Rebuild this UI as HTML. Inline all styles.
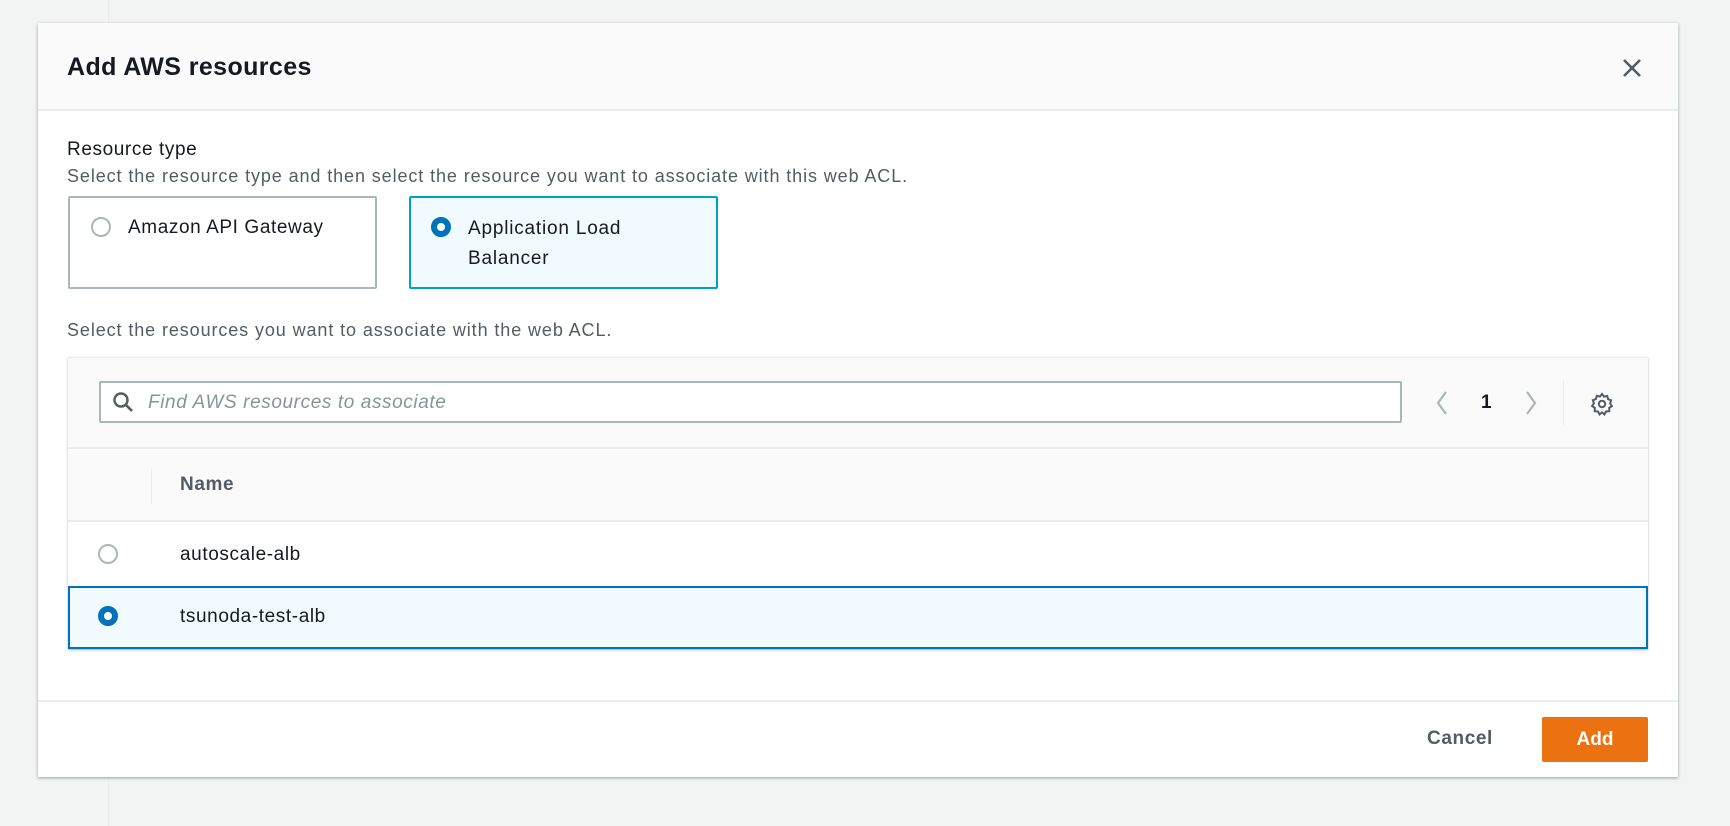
<!DOCTYPE html>
<html><head><meta charset="utf-8"><style>
*{box-sizing:border-box;margin:0;padding:0}
body{width:1730px;height:826px;background:#f2f3f3;font-family:"Liberation Sans",sans-serif;position:relative;overflow:hidden;color:#16191f}
.abs{position:absolute}
.vl{left:108px;top:0;width:1px;height:826px;background:#e9ebed}
.modal{left:38px;top:23px;width:1640px;height:754px;background:#fff;box-shadow:0 1px 3px rgba(0,28,36,.4)}
.hdr{left:0;top:0;width:1640px;height:88px;background:#fafafa;border-bottom:2px solid #eaeded}
.t{font-size:25px;font-weight:bold;left:29px;top:30px;letter-spacing:.4px}
.radio{width:20px;height:20px;border-radius:50%;border:2px solid #aab7b8;background:#fff}
.radio.on{border:6px solid #0073bb}
.txt{font-size:19px;white-space:nowrap;letter-spacing:.6px}
.grey{color:#545b64}
.d{font-size:18px;letter-spacing:.9px}
</style></head><body>
<div class="abs vl"></div>
<div class="abs modal">
 <div class="abs hdr"><div class="abs t">Add AWS resources</div>
  <svg class="abs" style="left:1584px;top:35px" width="20" height="20" viewBox="0 0 20 20"><path d="M2 2L18 18M18 2L2 18" stroke="#545b64" stroke-width="2.6"/></svg>
 </div>
 <div class="abs txt" style="left:29px;top:116px">Resource type</div>
 <div class="abs txt grey d" style="left:29px;top:143px">Select the resource type and then select the resource you want to associate with this web ACL.</div>
 <div class="abs" style="left:30px;top:173px;width:309px;height:93px;border:2px solid #aab7b8;border-radius:2px"></div>
 <div class="abs radio" style="left:53px;top:194px"></div>
 <div class="abs txt" style="left:90px;top:194px">Amazon API Gateway</div>
 <div class="abs" style="left:371px;top:173px;width:309px;height:93px;border:2px solid #00a1c9;border-radius:2px;background:#f1faff"></div>
 <div class="abs radio on" style="left:393px;top:194px"></div>
 <div class="abs txt" style="left:430px;top:191px;line-height:30px;letter-spacing:.8px">Application Load<br>Balancer</div>
 <div class="abs txt grey d" style="left:29px;top:297px">Select the resources you want to associate with the web ACL.</div>
 <div class="abs" style="left:30px;top:334px;width:1580px;height:292px;box-shadow:0 1px 2px rgba(0,28,36,.35);background:#fff;border-top:1px solid #eaeded"></div>
 <div class="abs" style="left:30px;top:335px;width:1580px;height:91px;background:#fafafa;border-bottom:2px solid #eaeded"></div>
 <div class="abs" style="left:61px;top:358px;width:1303px;height:42px;border:2px solid #aab7b8;border-radius:2px;background:#fff"></div>
 <svg class="abs" style="left:74px;top:368px" width="22" height="22" viewBox="0 0 22 22"><circle cx="9" cy="9" r="6.5" fill="none" stroke="#545b64" stroke-width="2.4"/><path d="M14 14L20 20" stroke="#545b64" stroke-width="2.6"/></svg>
 <div class="abs txt" style="left:110px;top:369px;color:#879596;font-style:italic">Find AWS resources to associate</div>
 <svg class="abs" style="left:1397px;top:367px" width="14" height="26" viewBox="0 0 14 26"><path d="M11 2L3 13L11 24" fill="none" stroke="#aab7b8" stroke-width="2.2"/></svg>
 <div class="abs txt" style="left:1443px;top:369px;font-weight:bold">1</div>
 <svg class="abs" style="left:1486px;top:367px" width="14" height="26" viewBox="0 0 14 26"><path d="M3 2L11 13L3 24" fill="none" stroke="#aab7b8" stroke-width="2.2"/></svg>
 <div class="abs" style="left:1525px;top:357px;width:1px;height:45px;background:#eaeded"></div>
 <svg class="abs" style="left:1552px;top:369px" width="24" height="24" viewBox="0 0 24 24"><path d="M12 2l2 2.6 3.2-.6.9 3.1 3 1.2-1 3.1 1.8 2.7-2.7 1.8.1 3.3-3.3.3-1.5 2.9L12 20.4 9.5 22.4 8 19.5l-3.3-.3.1-3.3L2.1 14 3.9 11.3 2.9 8.2l3-1.2.9-3.1 3.2.6z" fill="none" stroke="#545b64" stroke-width="2"/><circle cx="12" cy="12" r="3.2" fill="none" stroke="#545b64" stroke-width="2"/></svg>
 <div class="abs" style="left:30px;top:427px;width:1580px;height:72px;background:#fafafa;border-bottom:2px solid #eaeded"></div>
 <div class="abs" style="left:113px;top:445px;width:1px;height:36px;background:#eaeded"></div>
 <div class="abs txt" style="left:142px;top:451px;font-weight:bold;color:#545b64">Name</div>
 <div class="abs radio" style="left:60px;top:521px"></div>
 <div class="abs txt" style="left:142px;top:521px">autoscale-alb</div>
 <div class="abs" style="left:30px;top:563px;width:1580px;height:63px;border:2px solid #0073bb;background:#f1faff"></div>
 <div class="abs radio on" style="left:60px;top:583px"></div>
 <div class="abs txt" style="left:142px;top:583px">tsunoda-test-alb</div>
 <div class="abs" style="left:0;top:677px;width:1640px;height:2px;background:#eaeded"></div>
 <div class="abs txt" style="left:1389px;top:705px;font-weight:bold;color:#545b64">Cancel</div>
 <div class="abs" style="left:1504px;top:694px;width:106px;height:45px;background:#ec7211;border-radius:2px;color:#fff;font-weight:bold;font-size:19px;text-align:center;line-height:45px">Add</div>
</div>
</body></html>
